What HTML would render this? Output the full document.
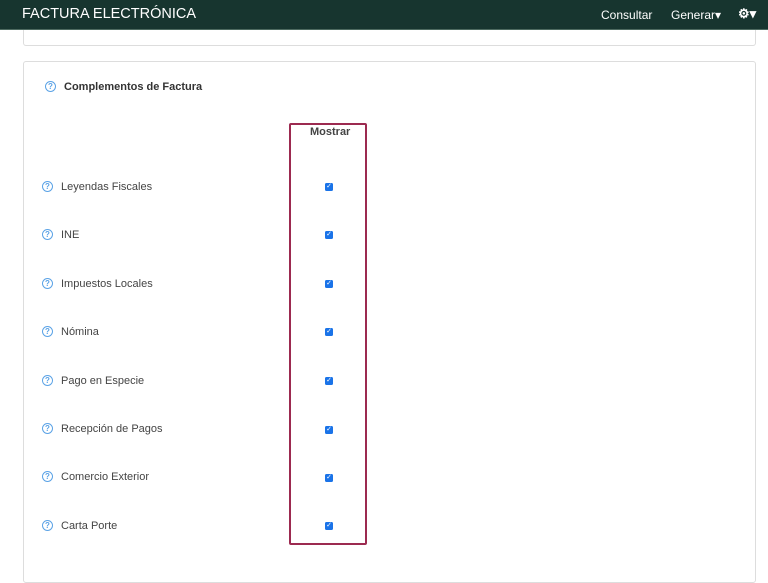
<!DOCTYPE html>
<html><head><style>
body{margin:0;width:768px;height:555px;overflow:hidden;background:#fff;font-family:"Liberation Sans",sans-serif;position:relative}
.nav{position:absolute;left:0;top:0;width:768px;height:29px;background:#17352f;border-bottom:1px solid #4d6a60;z-index:2}
.nav .t{position:absolute;left:22px;top:6px;color:#fff;font-size:14.5px}
.nav .a{position:absolute;top:8px;color:#fff;font-size:12px}
.p1{position:absolute;left:23px;top:20px;width:731px;height:25px;border:1px solid #ddd;border-top:none;border-radius:0 0 3px 3px}
.p2{position:absolute;left:23px;top:61px;width:731px;height:520px;border:1px solid #ddd;border-radius:3px}
.q{position:absolute;width:9px;height:9px;border:1.5px solid #5ba3e6;border-radius:50%;color:#5ba3e6;font-size:8px;line-height:9px;text-align:center;font-weight:bold}
.l{position:absolute;left:61px;font-size:11px;color:#444}
.cb{position:absolute;left:325px;width:8px;height:8px;background:#1a73e8;border-radius:1.5px;color:#fff;font-size:7px;line-height:8px;text-align:center}
.box{position:absolute;left:289px;top:123px;width:74px;height:418px;border:2px solid #9c2a50;border-radius:2px}
</style></head><body>
<div class="nav"><span class="t">FACTURA ELECTRÓNICA</span>
<span class="a" style="left:601px">Consultar</span><span class="a" style="left:671px">Generar▾</span><span class="a" style="left:738px;font-size:13px;top:6px;font-weight:bold">⚙▾</span></div>
<div class="p1"></div>
<div class="p2"></div>
<div class="q" style="left:45px;top:81px">?</div>
<div style="position:absolute;left:64px;top:81px;font-size:11px;font-weight:bold;color:#333">Complementos de Factura</div>
<div class="box"></div>
<div style="position:absolute;left:310px;top:126px;font-size:11px;font-weight:bold;color:#444">Mostrar</div>
<div class="q" style="left:42px;top:181px">?</div><div class="l" style="top:181px">Leyendas Fiscales</div><div class="cb" style="top:183px">✓</div>
<div class="q" style="left:42px;top:229px">?</div><div class="l" style="top:229px">INE</div><div class="cb" style="top:231px">✓</div>
<div class="q" style="left:42px;top:278px">?</div><div class="l" style="top:278px">Impuestos Locales</div><div class="cb" style="top:280px">✓</div>
<div class="q" style="left:42px;top:326px">?</div><div class="l" style="top:326px">Nómina</div><div class="cb" style="top:328px">✓</div>
<div class="q" style="left:42px;top:375px">?</div><div class="l" style="top:375px">Pago en Especie</div><div class="cb" style="top:377px">✓</div>
<div class="q" style="left:42px;top:423px">?</div><div class="l" style="top:423px">Recepción de Pagos</div><div class="cb" style="top:426px">✓</div>
<div class="q" style="left:42px;top:471px">?</div><div class="l" style="top:471px">Comercio Exterior</div><div class="cb" style="top:474px">✓</div>
<div class="q" style="left:42px;top:520px">?</div><div class="l" style="top:520px">Carta Porte</div><div class="cb" style="top:522px">✓</div>
</body></html>
